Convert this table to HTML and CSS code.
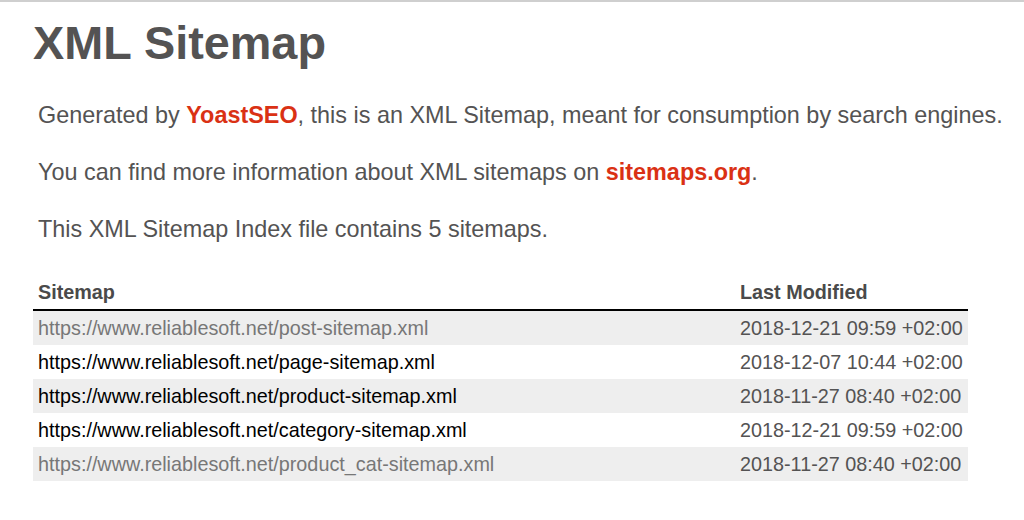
FILE: index.html
```html
<!DOCTYPE html>
<html>
<head>
<meta charset="utf-8">
<link rel="stylesheet" href="styles.css">
</head>
<body>
<div class="content">
  <h1 class="title">XML Sitemap</h1>
  <p class="expl">Generated by <a class="brand" href="#">YoastSEO</a>, this is an XML Sitemap, meant for consumption by search engines.</p>
  <p class="expl">You can find more information about XML sitemaps on <a class="brand" href="#">sitemaps.org</a>.</p>
  <p class="expl">This XML Sitemap Index file contains 5 sitemaps.</p>
  <table class="sitemap">
    <thead>
      <tr><th class="col-url">Sitemap</th><th class="col-date">Last Modified</th></tr>
    </thead>
    <tbody>
      <tr class="odd"><td><a class="visited" href="#">https://www.reliablesoft.net/post-sitemap.xml</a></td><td class="date">2018-12-21 09:59 +02:00</td></tr>
      <tr><td><a href="#">https://www.reliablesoft.net/page-sitemap.xml</a></td><td class="date">2018-12-07 10:44 +02:00</td></tr>
      <tr class="odd"><td><a href="#">https://www.reliablesoft.net/product-sitemap.xml</a></td><td class="date">2018-11-27 08:40 +02:00</td></tr>
      <tr><td><a href="#">https://www.reliablesoft.net/category-sitemap.xml</a></td><td class="date">2018-12-21 09:59 +02:00</td></tr>
      <tr class="odd"><td><a class="visited" href="#">https://www.reliablesoft.net/product_cat-sitemap.xml</a></td><td class="date">2018-11-27 08:40 +02:00</td></tr>
    </tbody>
  </table>
</div>
</body>
</html>
```

FILE: styles.css
```css
html, body {
  margin: 0;
  padding: 0;
  background: #fff;
}
body {
  font-family: "Liberation Sans", Arial, Helvetica, sans-serif;
  color: #545353;
  font-size: 23.4px;
  border-top: 2px solid #cfcfcf;
}
.content {
  padding: 0 0 0 33px;
}
.title {
  font-size: 46.8px;
  font-weight: bold;
  margin: 12px 0 0 0;
  line-height: 58px;
}
.expl {
  margin: 29px 0 0 5px;
  line-height: 28px;
}
.expl a.brand {
  color: #da3114;
  font-weight: bold;
  text-decoration: none;
}
.sitemap {
  margin-top: 38px;
  border-collapse: collapse;
  width: 935px;
}
.sitemap th {
  text-align: left;
  font-size: 19.8px;
  font-weight: bold;
  color: #4a4a4a;
  padding: 0 5px 5px 5px;
  border-bottom: 2px solid #000;
  white-space: nowrap;
}
.sitemap .col-date {
  width: 223px;
}
.sitemap td {
  font-size: 19.8px;
  height: 34px;
  padding: 0 5px;
  vertical-align: middle;
  white-space: nowrap;
}
.sitemap tr.odd td {
  background: #eeeeee;
}
.sitemap a {
  color: #000;
  text-decoration: none;
}
.sitemap a.visited {
  color: #777;
}
.sitemap .date {
  color: #545353;
}
```
